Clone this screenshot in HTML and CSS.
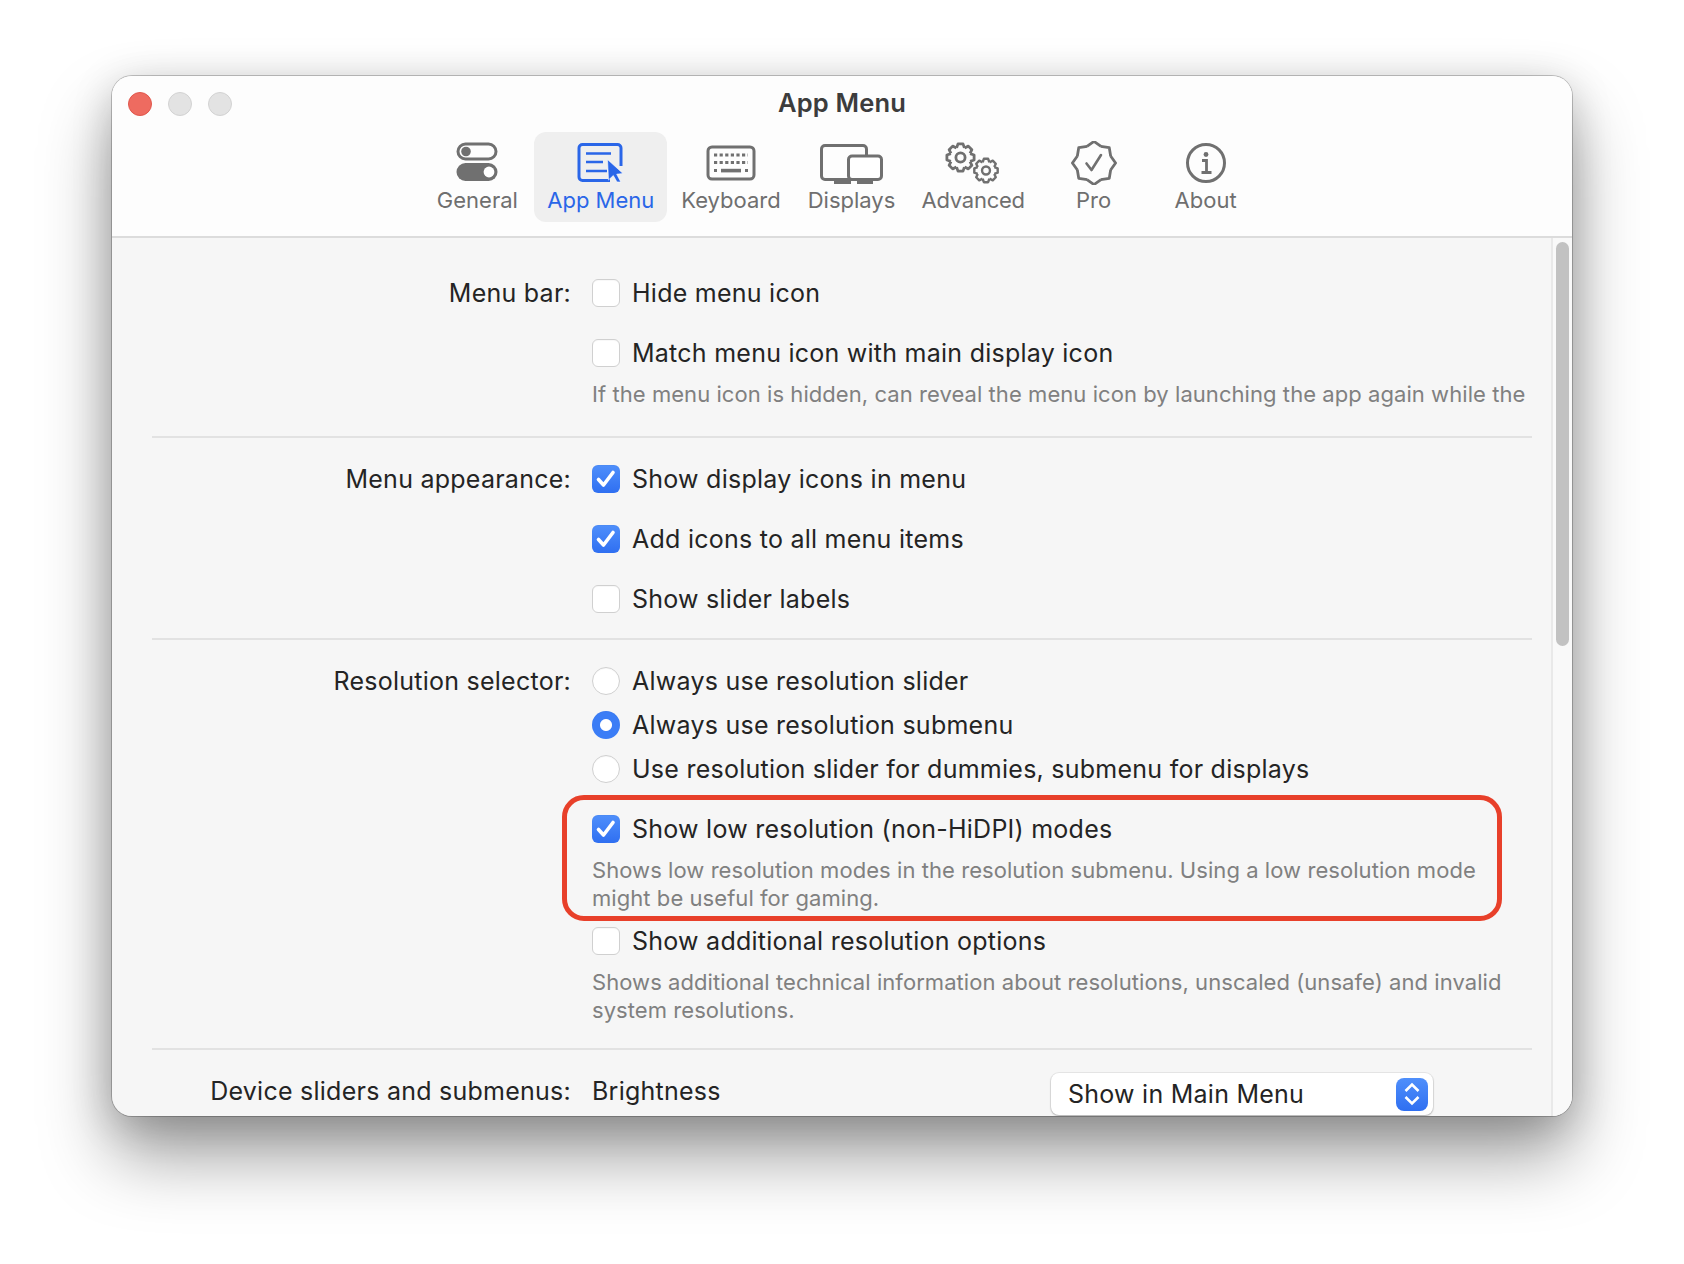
FILE: index.html
```html
<!DOCTYPE html>
<html lang="en">
<head>
<meta charset="utf-8">
<title>App Menu</title>
<link rel="stylesheet" href="styles.css">
</head>
<body>
<svg class="defs" width="0" height="0" aria-hidden="true">
  <defs>
    <path id="gear-seg" d="M-3.9 -9.6 L-2.5 -13.6 H2.5 L3.9 -9.6"/>
    <g id="gear">
      <use href="#gear-seg"/>
      <use href="#gear-seg" transform="rotate(45)"/>
      <use href="#gear-seg" transform="rotate(90)"/>
      <use href="#gear-seg" transform="rotate(135)"/>
      <use href="#gear-seg" transform="rotate(180)"/>
      <use href="#gear-seg" transform="rotate(225)"/>
      <use href="#gear-seg" transform="rotate(270)"/>
      <use href="#gear-seg" transform="rotate(315)"/>
      <circle r="4.6"/>
    </g>
    <path id="badge-seg" d="M-7 -16.6 L0 -21.6 L7 -16.6"/>
  </defs>
</svg>
<main class="window">
  <header class="header">
    <div class="titlebar">
      <div class="lights"><span class="light red"></span><span class="light"></span><span class="light"></span></div>
      <h1 class="title">App Menu</h1>
    </div>
    <nav class="toolbar">
      <div class="tool general">
        <svg class="icon" width="42" height="40" viewBox="0 0 42 40">
          <rect x="2" y="2" width="38" height="15" rx="7.5" fill="none" stroke="#707070" stroke-width="3"/>
          <circle cx="10" cy="9.5" r="4.8" fill="#707070"/>
          <rect x="0.5" y="21" width="41" height="18" rx="9" fill="#707070"/>
          <circle cx="33" cy="30" r="5.4" fill="#fff"/>
        </svg>
        <span>General</span>
      </div>
      <div class="tool active">
        <svg class="icon" width="48" height="40" viewBox="0 0 48 40">
          <path d="M44 24V6a3.5 3.5 0 0 0-3.500-3.500H5.500A3.500 3.500 0 0 0 2 6v29a3.500 3.500 0 0 0 3.500 3.500H33" fill="none" stroke="#2a66e8" stroke-width="3"/>
          <path d="M9 11.500h25M9 20h17M9 29h21" stroke="#2a66e8" stroke-width="2.600" fill="none"/>
          <path d="M30.500 17.500 L46 31.500 L39.700 32.200 L43.800 40 L40 40 L36.300 33.500 L31.500 38 Z" fill="#2a66e8" stroke="#fff" stroke-width="0.600"/>
        </svg>
        <span>App Menu</span>
      </div>
      <div class="tool">
        <svg class="icon shift-up" width="50" height="40" viewBox="0 0 50 40">
          <rect x="2" y="7" width="46" height="32" rx="4" fill="none" stroke="#707070" stroke-width="3"/>
          <path d="M8 15h34M8 22.500h34M8 30.500h3M39 30.500h3" stroke="#707070" stroke-width="3" stroke-dasharray="3.200 2.400" fill="none"/>
          <rect x="15" y="28.800" width="20" height="3.600" fill="#707070"/>
        </svg>
        <span>Keyboard</span>
      </div>
      <div class="tool">
        <svg class="icon shift-down2" width="64" height="40" viewBox="0 0 64 40">
          <rect x="1.500" y="1.500" width="45" height="34" rx="3.500" fill="none" stroke="#707070" stroke-width="3"/>
          <path d="M18 35h9l1 2h3v3H14v-3h3z" fill="#707070"/>
          <rect x="28.500" y="12" width="33" height="23.500" rx="3.500" fill="#fff" stroke="#707070" stroke-width="3"/>
          <path d="M41 35h8l1 2h3v3H37v-3h3z" fill="#707070"/>
        </svg>
        <span>Displays</span>
      </div>
      <div class="tool advanced">
        <svg class="icon shift-down" width="56" height="42" viewBox="0 0 56 42">
          <g fill="none" stroke="#707070" stroke-width="2.800" stroke-linejoin="round">
            <use href="#gear" transform="translate(15.500 15.500)"/>
            <use href="#gear" transform="translate(41 28.500) scale(.86)"/>
          </g>
        </svg>
        <span>Advanced</span>
      </div>
      <div class="tool wide">
        <svg class="icon shift-down" width="46" height="44" viewBox="-23 -22 46 44">
          <g fill="none" stroke="#707070" stroke-width="2.800" stroke-linejoin="round">
            <use href="#badge-seg"/>
            <use href="#badge-seg" transform="rotate(45)"/>
            <use href="#badge-seg" transform="rotate(90)"/>
            <use href="#badge-seg" transform="rotate(135)"/>
            <use href="#badge-seg" transform="rotate(180)"/>
            <use href="#badge-seg" transform="rotate(225)"/>
            <use href="#badge-seg" transform="rotate(270)"/>
            <use href="#badge-seg" transform="rotate(315)"/>
            <path d="M-7.500 0.500 L-2.500 7 L7 -8" stroke-width="2.600" stroke-linecap="round"/>
          </g>
        </svg>
        <span>Pro</span>
      </div>
      <div class="tool wide">
        <svg class="icon shift-down" width="42" height="42" viewBox="0 0 42 42">
          <circle cx="21" cy="21" r="18.500" fill="none" stroke="#707070" stroke-width="3"/>
          <circle cx="21" cy="12.500" r="2.400" fill="#707070"/>
          <path d="M17 18.500h4.500V30M16.500 30.500h10" fill="none" stroke="#707070" stroke-width="2.800"/>
        </svg>
        <span>About</span>
      </div>
    </nav>
  </header>
  <div class="body">
    <div class="content">
      <section class="section first">
        <div class="label">Menu bar:</div>
        <div class="controls">
          <div class="opt"><span class="box"></span>Hide menu icon</div>
          <div class="opt"><span class="box"></span>Match menu icon with main display icon</div>
          <p class="help nowrap">If the menu icon is hidden, can reveal the menu icon by launching the app again while the</p>
        </div>
      </section>
      <section class="section">
        <div class="label">Menu appearance:</div>
        <div class="controls">
          <div class="opt"><span class="box on"><svg width="22" height="22" viewBox="0 0 22 22"><path d="M3.500 11.500 L8.500 17 L18 4.500" class="tick"/></svg></span>Show display icons in menu</div>
          <div class="opt"><span class="box on"><svg width="22" height="22" viewBox="0 0 22 22"><path d="M3.500 11.500 L8.500 17 L18 4.500" class="tick"/></svg></span>Add icons to all menu items</div>
          <div class="opt"><span class="box"></span>Show slider labels</div>
        </div>
      </section>
      <section class="section last">
        <div class="label">Resolution selector:</div>
        <div class="controls">
          <div class="opt radio-opt"><span class="box round"></span>Always use resolution slider</div>
          <div class="opt radio-opt"><span class="box round sel"></span>Always use resolution submenu</div>
          <div class="opt radio-opt"><span class="box round"></span>Use resolution slider for dummies, submenu for displays</div>
          <div class="opt"><span class="box on"><svg width="22" height="22" viewBox="0 0 22 22"><path d="M3.500 11.500 L8.500 17 L18 4.500" class="tick"/></svg></span>Show low resolution (non-HiDPI) modes</div>
          <p class="help">Shows low resolution modes in the resolution submenu. Using a low resolution mode<br>might be useful for gaming.</p>
          <div class="opt after-help"><span class="box"></span>Show additional resolution options</div>
          <p class="help">Shows additional technical information about resolutions, unscaled (unsafe) and invalid<br>system resolutions.</p>
        </div>
      </section>
      <section class="device">
        <div class="label">Device sliders and submenus:</div>
        <div class="device-main">
          <span>Brightness</span>
          <div class="popup">
            <span>Show in Main Menu</span>
            <span class="stepper"><svg width="18" height="26" viewBox="0 0 18 26"><path d="M2.500 10 L9 3.500 L15.500 10M2.500 16 L9 22.500 L15.500 16" fill="none" stroke="#fff" stroke-width="2.600"/></svg></span>
          </div>
        </div>
      </section>
      <div class="highlight"></div>
    </div>
    <aside class="gutter"><div class="thumb"></div></aside>
  </div>
</main>
</body>
</html>
```
FILE: styles.css
```css
* { box-sizing: border-box; }
html, body { margin: 0; padding: 0; }
body {
  width: 1684px;
  height: 1264px;
  overflow: hidden;
  background: #fff;
  padding: 76px 112px 0;
  font-family: Inter, "Liberation Sans", sans-serif;
  color: #242424;
  font-size: 25px;
  letter-spacing: .25px;
}
.defs { position: absolute; }
.window {
  width: 1460px;
  height: 1040px;
  background: #f6f6f6;
  border-radius: 20px;
  overflow: hidden;
  display: flex;
  flex-direction: column;
  box-shadow: 0 0 0 1px rgba(0,0,0,.22);
}
body::before {
  content: "";
  position: absolute;
  left: 112px;
  top: 76px;
  width: 1460px;
  height: 1040px;
  border-radius: 20px;
  box-shadow: 0 40px 70px rgba(0,0,0,.38), 0 8px 40px rgba(0,0,0,.18);
  z-index: -1;
}
.header {
  background: #fdfdfd;
  height: 162px;
  border-bottom: 2px solid #dcdcdc;
  padding: 13px 0 0;
  flex: none;
}
.titlebar {
  display: grid;
  grid-template-columns: 1fr auto 1fr;
  align-items: center;
  height: 28px;
}
.lights { display: flex; gap: 16px; margin-left: 16px; transform: translateY(1px); }
.light {
  width: 24px;
  height: 24px;
  border-radius: 50%;
  background: #e3e3e3;
  border: 1px solid #d2d2d2;
}
.light.red { background: #ee6b60; border-color: #e0574c; }
.title {
  margin: 0;
  font-size: 25.5px;
  font-weight: 600;
  letter-spacing: .2px;
  color: #3c3c3c;
  line-height: 28px;
}
.toolbar {
  display: flex;
  justify-content: center;
  align-items: stretch;
  gap: 1px;
  height: 90px;
  margin-top: 15px;
  padding-left: 1px;
}
.tool {
  display: flex;
  flex-direction: column;
  align-items: center;
  padding: 8px 13px 0;
  font-size: 22px;
  letter-spacing: 0;
  color: #6f6f6f;
  border-radius: 12px;
  line-height: 28px;
}
.tool .icon { height: 44px; flex: none; margin-bottom: 2px; }
.tool .shift-up { transform: translateY(-2px); }
.tool .shift-down { transform: translateY(1px); }
.tool .shift-down2 { transform: translateY(2px); }
.tool.general { margin-right: 2.400px; }
.tool.advanced { letter-spacing: -.25px; padding-left: 12.300px; padding-right: 12.300px; }
.tool.active { background: #efefef; color: #2a66e8; }
.tool.wide { width: 111px; }
.body { flex: 1; display: flex; min-height: 0; }
.content { position: relative; flex: 1; padding: 0 19px 0 40px; min-width: 0; }
.section {
  display: grid;
  grid-template-columns: 419px 1fr;
  column-gap: 21px;
  padding: 27px 0 25px;
  border-bottom: 2px solid #e2e2e2;
}
.section.first { padding-top: 41px; padding-bottom: 28px; }
.section.last { padding-bottom: 24px; }
.label { text-align: right; line-height: 28px; white-space: nowrap; }
.controls { display: flex; flex-direction: column; align-items: flex-start; min-width: 0; }
.opt {
  display: flex;
  align-items: center;
  gap: 12px;
  height: 28px;
  white-space: nowrap;
}
.opt + .opt { margin-top: 32px; }
.radio-opt + .radio-opt { margin-top: 16px; }
.opt.after-help { margin-top: 15px; }
.box {
  width: 28px;
  height: 28px;
  flex: none;
  border-radius: 6px;
  background: #fff;
  border: 1px solid #d0d0d0;
  box-shadow: inset 0 1px 1px rgba(0,0,0,.03);
  display: flex;
  align-items: center;
  justify-content: center;
}
.box.on {
  background: linear-gradient(#4f8ffb, #2f6ff1);
  border: 0;
}
.box.round { border-radius: 50%; }
.box.sel {
  background: radial-gradient(circle, #fff 0 5.500px, #3b7df6 6.500px);
  border: 0;
}
.tick { fill: none; stroke: #fff; stroke-width: 3.600; stroke-linecap: round; stroke-linejoin: round; }
.help {
  margin: 13px 0 0;
  font-size: 22px;
  letter-spacing: .06px;
  line-height: 28px;
  color: #808080;
  white-space: nowrap;
}
.device {
  display: grid;
  grid-template-columns: 419px 1fr;
  column-gap: 21px;
  padding-top: 27px;
}
.device-main { display: flex; justify-content: space-between; align-items: flex-start; line-height: 28px; padding-right: 99px; }
.popup {
  width: 382px;
  height: 42px;
  margin-top: -4px;
  background: #fff;
  border-radius: 8px;
  box-shadow: 0 0 0 1px rgba(0,0,0,.06), 0 1px 2px rgba(0,0,0,.25);
  display: flex;
  align-items: center;
  justify-content: space-between;
  padding: 0 5px 0 17px;
  line-height: 42px;
}
.stepper {
  width: 32px;
  height: 33px;
  border-radius: 8px;
  background: linear-gradient(#4f8ffb, #2f6ff1);
  display: flex;
  align-items: center;
  justify-content: center;
}
.gutter {
  width: 21px;
  flex: none;
  background: #f9f9f9;
  border-left: 2px solid #e9e9e9;
  padding: 4px 3px 0 3px;
}
.thumb { width: 13px; height: 404px; border-radius: 7px; background: #c2c2c2; }
.highlight {
  position: absolute;
  left: 450px;
  top: 557px;
  width: 940px;
  height: 126px;
  border: 5px solid #e8402a;
  border-radius: 22px;
}
```
